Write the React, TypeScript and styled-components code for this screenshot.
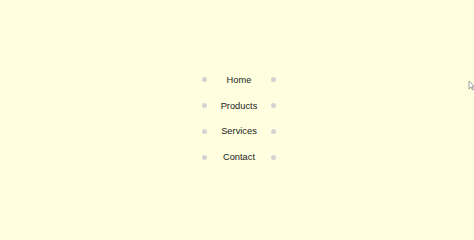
import React from 'react';
import styled, { createGlobalStyle } from 'styled-components';

const GlobalStyle = createGlobalStyle`
  html, body {
    margin: 0;
    padding: 0;
    height: 100%;
    background: #ffffe0;
  }
  #root {
    height: 100%;
  }
`;

const Page = styled.div`
  position: relative;
  height: 100vh;
  display: flex;
  align-items: center;
  justify-content: center;
  padding: 0 0 3px 4px;
  box-sizing: border-box;
  font-family: 'Liberation Sans', Arial, sans-serif;
`;

const Menu = styled.ul`
  list-style: none;
  margin: 0;
  padding: 0;
  display: flex;
  flex-direction: column;
  gap: 9.8px;
`;

const MenuItem = styled.li`
  display: flex;
  align-items: center;
  justify-content: space-between;
  width: 74px;
  height: 16px;

  &::before,
  &::after {
    content: '';
    width: 5px;
    height: 5px;
    border-radius: 50%;
    background: #d3d3d3;
  }
`;

const Link = styled.a`
  color: #222;
  font-size: 9.3px;
  text-decoration: none;
  white-space: nowrap;
`;

const Pointer = styled.svg`
  position: absolute;
  left: 468px;
  top: 80px;
`;

const items = ['Home', 'Products', 'Services', 'Contact'];

const App = () => (
  <>
    <GlobalStyle />
    <Page>
      <Menu>
        {items.map((item) => (
          <MenuItem key={item}>
            <Link href="#">{item}</Link>
          </MenuItem>
        ))}
      </Menu>
      <Pointer width="7" height="11" viewBox="0 0 7 11">
        <path
          d="M1 1 L1 9 L3 7 L4.5 10 L5.5 9.5 L4.2 6.6 L6.5 6.6 Z"
          fill="#fff"
          stroke="#888"
          strokeWidth="0.8"
        />
      </Pointer>
    </Page>
  </>
);

export default App;
